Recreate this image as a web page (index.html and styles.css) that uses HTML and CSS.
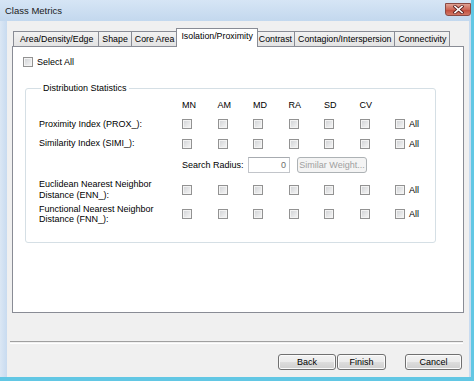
FILE: index.html
```html
<!DOCTYPE html>
<html lang="en">
<head>
    <meta charset="UTF-8">
    <meta name="viewport" content="width=device-width, initial-scale=1.0">
    <title>Class Metrics</title>
    <link rel="stylesheet" href="styles.css">
</head>
<body>

    <div class="window">
        <!-- Title bar -->
        <div class="titlebar">
            <span class="title">Class Metrics</span>
            <span class="close" aria-label="Close">
                <svg width="11" height="9" viewBox="0 0 11 9">
                    <path d="M2 1.5 L9 7.5 M9 1.5 L2 7.5" stroke="#5a1f1f" stroke-width="3.2" stroke-linecap="square"/>
                    <path d="M2 1.5 L9 7.5 M9 1.5 L2 7.5" stroke="#ffffff" stroke-width="1.6" stroke-linecap="square"/>
                </svg>
            </span>
        </div>

        <div class="client">
            <!-- Tabs -->
            <div class="tabs">
                <div class="tab">Area/Density/Edge</div>
                <div class="tab">Shape</div>
                <div class="tab">Core Area</div>
                <div class="tab active">Isolation/Proximity</div>
                <div class="tab">Contrast</div>
                <div class="tab">Contagion/Interspersion</div>
                <div class="tab">Connectivity</div>
            </div>

            <div class="panel">
                <label class="check select-all"><span class="box"></span>Select All</label>

                <fieldset class="group">
                    <legend>Distribution Statistics</legend>
                    <div class="stats">
                        <!-- header -->
                        <span></span>
                        <span class="col-head">MN</span>
                        <span class="col-head">AM</span>
                        <span class="col-head">MD</span>
                        <span class="col-head">RA</span>
                        <span class="col-head">SD</span>
                        <span class="col-head">CV</span>
                        <span></span>

                        <!-- PROX -->
                        <span class="row-label">Proximity Index (PROX_):</span>
                        <span class="box"></span><span class="box"></span><span class="box"></span>
                        <span class="box"></span><span class="box"></span><span class="box"></span>
                        <label class="check"><span class="box"></span>All</label>

                        <!-- SIMI -->
                        <span class="row-label">Similarity Index (SIMI_):</span>
                        <span class="box"></span><span class="box"></span><span class="box"></span>
                        <span class="box"></span><span class="box"></span><span class="box"></span>
                        <label class="check"><span class="box"></span>All</label>

                        <!-- search radius -->
                        <span></span>
                        <div class="search">
                            <span class="search-label">Search Radius:</span>
                            <span class="input disabled">0</span>
                            <button class="btn disabled weight">Similar Weight...</button>
                        </div>

                        <!-- ENN -->
                        <span class="row-label">Euclidean Nearest Neighbor<br>Distance (ENN_):</span>
                        <span class="box"></span><span class="box"></span><span class="box"></span>
                        <span class="box"></span><span class="box"></span><span class="box"></span>
                        <label class="check"><span class="box"></span>All</label>

                        <!-- FNN -->
                        <span class="row-label">Functional Nearest Neighbor<br>Distance (FNN_):</span>
                        <span class="box"></span><span class="box"></span><span class="box"></span>
                        <span class="box"></span><span class="box"></span><span class="box"></span>
                        <label class="check"><span class="box"></span>All</label>
                    </div>
                </fieldset>
            </div>

            <div class="separator"></div>

            <div class="buttons">
                <button class="btn back">Back</button>
                <button class="btn finish">Finish</button>
                <button class="btn cancel">Cancel</button>
            </div>
        </div>
    </div>

</body>
</html>
```

FILE: styles.css
```css
body {
    margin: 0;
    padding: 0;
    background: #ffffff;
    font-family: "Liberation Sans", Arial, sans-serif;
    font-size: 9px;
    color: #000;
}
.window {
    width: 474px;
    height: 381px;
    box-sizing: border-box;
    display: flex;
    flex-direction: column;
    background: linear-gradient(to right, #dbe7f4, #c8dbf0 7px);
    border-right: 3px solid #62c7e4;
    border-bottom: 4px solid #62c7e4;
}
.titlebar {
    height: 21px;
    flex: none;
    display: flex;
    align-items: center;
    justify-content: space-between;
    padding: 0 0 0 5px;
    background: linear-gradient(#d6e5f5, #c3d8ee);
}
.title {
    font-size: 9.5px;
    color: #1a1a1a;
    margin-top: -1px;
}
.close {
    width: 26px;
    height: 13px;
    margin: -3px 0 0 0;
    display: flex;
    align-items: center;
    justify-content: center;
    border: 1px solid #8a4a44;
    border-radius: 0 0 3px 3px;
    background: linear-gradient(#dfa294, #cc6656 50%, #c04a3a 51%, #d27866);
    box-sizing: border-box;
}
.client {
    flex: 1;
    margin: 0 2px 0 7px;
    background: #f0f0f0;
    display: flex;
    flex-direction: column;
}
.tabs {
    display: flex;
    align-items: flex-end;
    height: 25px;
    padding-left: 7px;
    box-sizing: border-box;
    font-size: 8.8px;
}
.tab {
    height: 15px;
    line-height: 14px;
    padding: 0 3px;
    margin-left: -1px;
    border: 1px solid #898c95;
    border-bottom: none;
    box-sizing: border-box;
    white-space: nowrap;
    background: linear-gradient(#f2f2f2, #e3e3e3);
}
.tab:first-child {
    padding: 0 5px 0 6px;
}
.tab.active {
    position: relative;
    z-index: 1;
    height: 19px;
    line-height: 15px;
    padding: 0 4px;
    margin: 0 -2px -1px -2px;
    background: #ffffff;
}
.tab.active + .tab {
    margin-left: 0;
    padding: 0 2px;
}
.panel {
    height: 267px;
    margin: 0 5px;
    border: 1px solid #898c95;
    background: #ffffff;
    box-sizing: border-box;
    padding: 10px 0 0 10px;
}
.check {
    display: flex;
    align-items: center;
    gap: 4px;
}
.box {
    display: inline-block;
    width: 10px;
    height: 10px;
    box-sizing: border-box;
    border: 1px solid #929292;
    background: linear-gradient(135deg, #cfd1d4, #f7f7f7);
    box-shadow: inset 0 0 0 1px #f3f3f3;
}
.select-all {
    width: 60px;
}
.group {
    width: 410px;
    box-sizing: border-box;
    margin: 16px 0 0 2px;
    padding: 5px 0 11px 13px;
    border: 1px solid #d5dfe5;
    border-radius: 3px;
}
.group legend {
    padding: 0 2px;
    margin-left: 2px;
}
.stats {
    display: grid;
    grid-template-columns: 143px repeat(6, 35.5px) 40px;
    grid-template-rows: 15px 20px 19px 23px 27px 22px;
    align-items: center;
    height: 132px;
    margin-top: 1px;
}
.col-head {
    margin-top: -3px;
}
.row-label {
    line-height: 10.5px;
}
.search {
    grid-column: 2 / 9;
    display: flex;
    align-items: center;
}
.search-label {
    width: 66px;
}
.input {
    width: 42px;
    height: 16px;
    box-sizing: border-box;
    border: 1px solid #c2c5ca;
    border-top-color: #a7abb0;
    background: #ffffff;
    text-align: right;
    padding-right: 3px;
    line-height: 14px;
    color: #6d6d6d;
}
.btn {
    font-family: "Liberation Sans", Arial, sans-serif;
    font-size: 9px;
    height: 16px;
    padding: 0;
    border: 1px solid #707070;
    border-radius: 3px;
    background: linear-gradient(#f2f2f2, #ebebeb 50%, #dddddd 51%, #cfcfcf);
    box-shadow: inset 0 0 0 1px #fbfbfb;
    color: #000;
}
.btn.disabled {
    border-color: #adb2b5;
    background: #f4f4f4;
    box-shadow: none;
    color: #a0a0a0;
}
.weight {
    width: 70px;
    margin-left: 7px;
}
.separator {
    margin: 28px 6px 0 3px;
    height: 1px;
    border-top: 1px solid #a0a0a0;
    border-bottom: 1px solid #ffffff;
}
.buttons {
    display: flex;
    justify-content: flex-end;
    margin: 10px 7px 0 0;
}
.back {
    width: 58px;
}
.finish {
    width: 49px;
    margin-left: 1px;
}
.cancel {
    width: 57px;
    margin-left: 19px;
}
```
